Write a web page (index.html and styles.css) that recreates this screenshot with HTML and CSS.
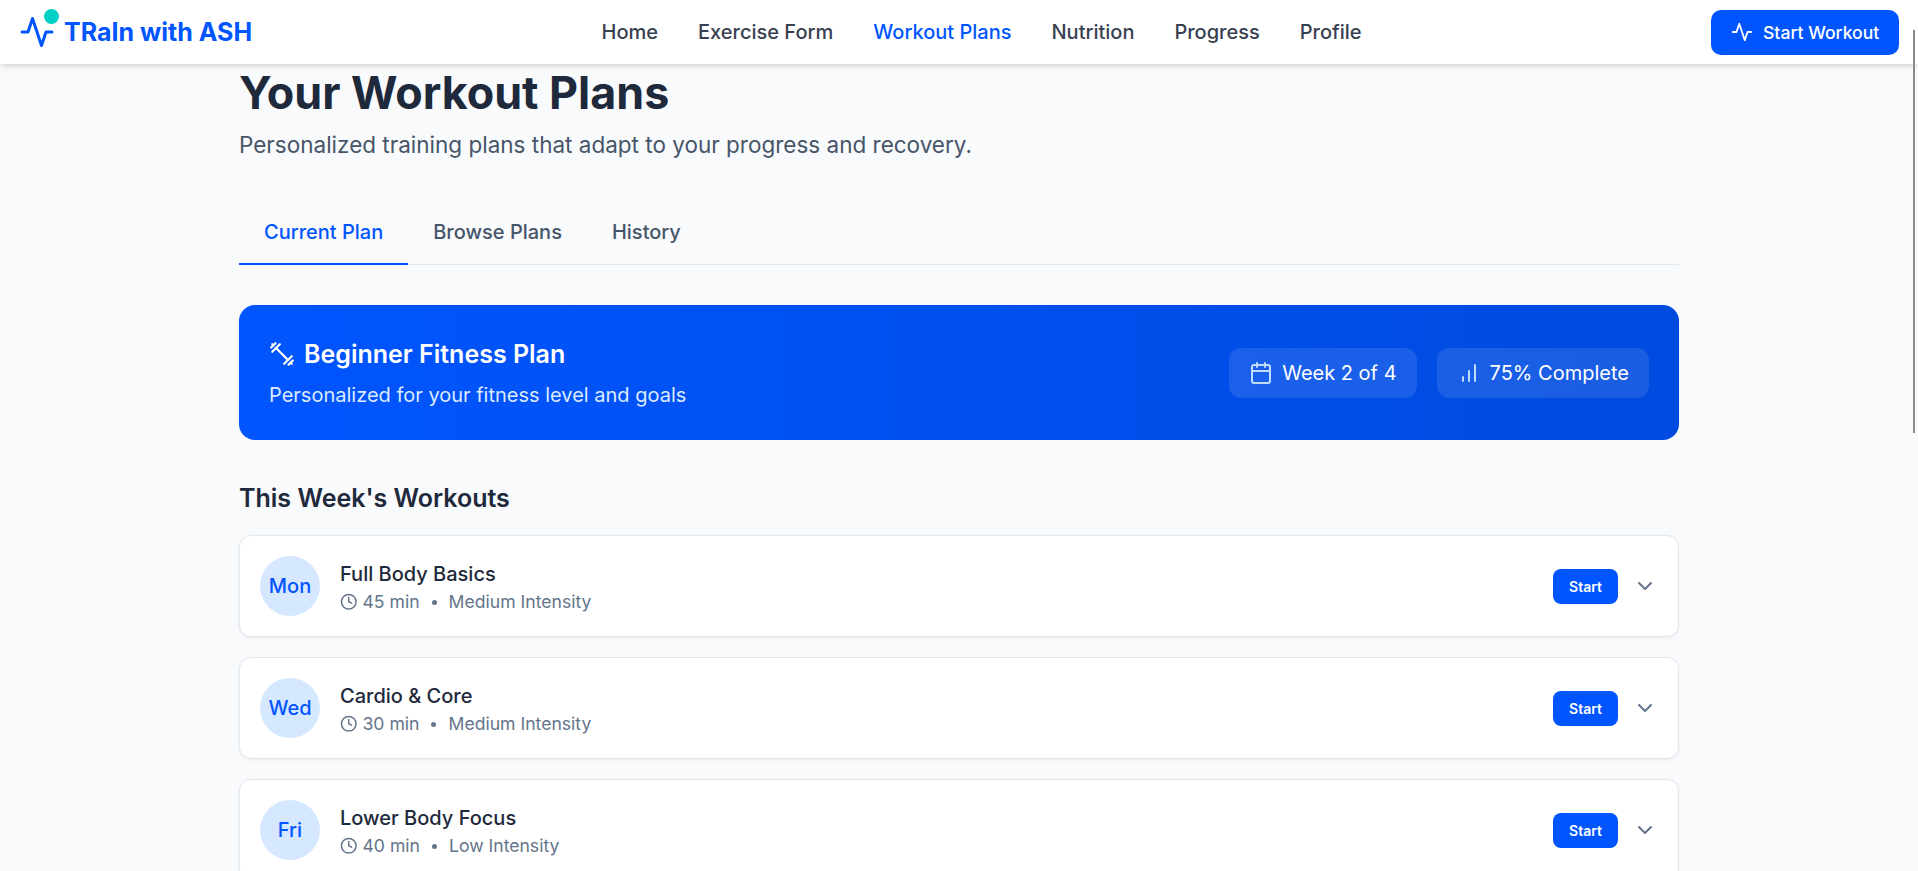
FILE: index.html
```html
<!DOCTYPE html>
<html>
<head>
  <title>TRaIn with ASH</title>
  <link rel="stylesheet" href="styles.css">
</head>
<body>
  <header class="topbar">
    <a class="logo">
      <span class="logo-mark">
        <svg class="logo-pulse" viewBox="0 0 24 24"><path d="M22 12h-4l-3 9L9 3l-3 9H2"/></svg>
        <span class="logo-dot"></span>
      </span>
      <span class="logo-text">TRaIn with ASH</span>
    </a>
    <nav class="nav">
      <a>Home</a>
      <a>Exercise Form</a>
      <a class="active">Workout Plans</a>
      <a>Nutrition</a>
      <a>Progress</a>
      <a>Profile</a>
    </nav>
    <button class="start-workout">
      <svg class="icon-22" viewBox="0 0 24 24"><path d="M22 12h-4l-3 9L9 3l-3 9H2"/></svg>
      Start Workout
    </button>
  </header>

  <main class="page">
    <h1>Your Workout Plans</h1>
    <p class="lead">Personalized training plans that adapt to your progress and recovery.</p>

    <div class="tabs">
      <a class="tab active">Current Plan</a>
      <a class="tab">Browse Plans</a>
      <a class="tab">History</a>
    </div>

    <section class="plan-hero">
      <div class="plan-heading">
        <h2>
          <svg class="icon-26" viewBox="0 0 24 24"><path d="m6.5 6.5 11 11"/><path d="m21 21-1-1"/><path d="m3 3 1 1"/><path d="m18 22 4-4"/><path d="m2 6 4-4"/><path d="m3 10 7-7"/><path d="m14 21 7-7"/></svg>
          Beginner Fitness Plan
        </h2>
        <p>Personalized for your fitness level and goals</p>
      </div>
      <div class="plan-stats">
        <div class="stat">
          <svg class="icon-24 stat-icon" viewBox="0 0 24 24"><path d="M8 2v4"/><path d="M16 2v4"/><rect x="3" y="4" width="18" height="18" rx="2"/><path d="M3 10h18"/></svg>
          Week 2 of 4
        </div>
        <div class="stat">
          <svg class="icon-24 stat-icon" viewBox="0 0 24 24"><path d="M18 20V4"/><path d="M12 20V10"/><path d="M6 20v-4"/></svg>
          75% Complete
        </div>
      </div>
    </section>

    <h3 class="week-title">This Week's Workouts</h3>

    <div class="workouts">
      <div class="workout">
        <div class="day">Mon</div>
        <div class="workout-info">
          <div class="workout-name">Full Body Basics</div>
          <div class="workout-meta">
            <svg class="icon-clock" viewBox="0 0 24 24"><circle cx="12" cy="12" r="10"/><path d="M12 6v6l4 2"/></svg>
            <span>45 min</span><span class="sep"></span><span>Medium Intensity</span>
          </div>
        </div>
        <button class="start">Start</button>
        <svg class="chevron" viewBox="0 0 24 24"><path d="m6 9 6 6 6-6"/></svg>
      </div>
      <div class="workout">
        <div class="day">Wed</div>
        <div class="workout-info">
          <div class="workout-name">Cardio &amp; Core</div>
          <div class="workout-meta">
            <svg class="icon-clock" viewBox="0 0 24 24"><circle cx="12" cy="12" r="10"/><path d="M12 6v6l4 2"/></svg>
            <span>30 min</span><span class="sep"></span><span>Medium Intensity</span>
          </div>
        </div>
        <button class="start">Start</button>
        <svg class="chevron" viewBox="0 0 24 24"><path d="m6 9 6 6 6-6"/></svg>
      </div>
      <div class="workout">
        <div class="day">Fri</div>
        <div class="workout-info">
          <div class="workout-name">Lower Body Focus</div>
          <div class="workout-meta">
            <svg class="icon-clock" viewBox="0 0 24 24"><circle cx="12" cy="12" r="10"/><path d="M12 6v6l4 2"/></svg>
            <span>40 min</span><span class="sep"></span><span>Low Intensity</span>
          </div>
        </div>
        <button class="start">Start</button>
        <svg class="chevron" viewBox="0 0 24 24"><path d="m6 9 6 6 6-6"/></svg>
      </div>
    </div>
  </main>

  <div class="scroll-thumb"></div>
</body>
</html>
```

FILE: styles.css
```css
* {
  box-sizing: border-box;
}

html,
body {
  height: 100%;
  overflow: hidden;
}

body {
  margin: 0;
  font-family: Inter, "Liberation Sans", sans-serif;
  color: #1e293b;
  background-color: #f8fafc;
}

svg {
  fill: none;
  stroke: currentColor;
  stroke-width: 2;
  stroke-linecap: round;
  stroke-linejoin: round;
  flex-shrink: 0;
}

.icon-clock {
  width: 17.5px;
  height: 17.5px;
}

.icon-22 {
  width: 22px;
  height: 22px;
}

.icon-24 {
  width: 24px;
  height: 24px;
}

.icon-26 {
  width: 26px;
  height: 26px;
}

/* top bar */
.topbar {
  display: flex;
  align-items: center;
  justify-content: space-between;
  height: 64px;
  padding: 0 19px;
  background-color: #fff;
  box-shadow: 0 4px 6px -1px rgba(0, 0, 0, 0.1), 0 2px 4px -2px rgba(0, 0, 0, 0.1);
  position: relative;
  z-index: 2;
}

.logo {
  display: flex;
  align-items: center;
  gap: 9px;
}

.logo-mark {
  position: relative;
  display: block;
  width: 36px;
  height: 36px;
}

.logo-pulse {
  display: block;
  width: 36px;
  height: 36px;
  color: #0055ff;
}

.logo-dot {
  position: absolute;
  top: -5px;
  right: -4px;
  width: 15px;
  height: 15px;
  border-radius: 50%;
  background-color: #00d1c7;
}

.logo-text {
  font-size: 25px;
  font-weight: 700;
  color: #0055ff;
}

.nav {
  display: flex;
  gap: 40px;
}

.nav a {
  font-size: 20px;
  font-weight: 500;
  color: #374151;
}

.nav a.active {
  color: #0055ff;
}

.start-workout {
  display: flex;
  align-items: center;
  gap: 10px;
  width: 188px;
  height: 45px;
  padding: 0 20px;
  border: none;
  border-radius: 10px;
  font-family: inherit;
  font-size: 17.6px;
  font-weight: 500;
  white-space: nowrap;
  color: #fff;
  background-color: #0055ff;
}

/* main */
.page {
  width: 1440px;
  margin: 0 auto;
  padding-top: 3px;
}

h1 {
  margin: 0;
  font-size: 44.8px;
  line-height: 53px;
  font-weight: 700;
}

.lead {
  margin: 8px 0 0;
  font-size: 22.5px;
  line-height: 33px;
  color: #475569;
}

.tabs {
  display: flex;
  margin-top: 41px;
  border-bottom: 1px solid #e2e8f0;
}

.tab {
  padding: 16px 25px 17px;
  font-size: 20px;
  font-weight: 500;
  line-height: 28px;
  color: #475569;
  border-bottom: 2px solid transparent;
  margin-bottom: -1px;
}

.tab.active {
  color: #0055ff;
  border-bottom-color: #0055ff;
}

.plan-hero {
  display: flex;
  align-items: center;
  justify-content: space-between;
  height: 135px;
  margin-top: 40px;
  padding: 0 30px;
  border-radius: 16px;
  color: #fff;
  background: linear-gradient(90deg, #0055ff, #004bdf);
}

.plan-heading {
  padding-top: 2px;
}

.plan-hero h2 {
  display: flex;
  align-items: center;
  gap: 9px;
  margin: 0;
  font-size: 25px;
  line-height: 32px;
  font-weight: 600;
}

.plan-hero p {
  margin: 10px 0 0;
  font-size: 20px;
  line-height: 30px;
  color: #dbeafe;
}

.plan-stats {
  display: flex;
  gap: 20px;
}

.stat {
  display: flex;
  align-items: center;
  gap: 9px;
  height: 50px;
  padding: 0 20px;
  border-radius: 12px;
  font-size: 20px;
  background-color: rgba(255, 255, 255, 0.1);
}

.stat-icon {
  color: #bfdbfe;
}

.week-title {
  margin: 42px 0 21px;
  font-size: 25px;
  line-height: 32px;
  font-weight: 600;
}

.workouts {
  display: flex;
  flex-direction: column;
  gap: 20px;
}

.workout {
  display: flex;
  align-items: center;
  height: 102px;
  padding: 0 21px 0 20px;
  border: 1px solid #e2e8f0;
  border-radius: 12px;
  background-color: #fff;
  box-shadow: 0 1px 3px rgba(0, 0, 0, 0.06);
}

.day {
  display: flex;
  align-items: center;
  justify-content: center;
  width: 60px;
  height: 60px;
  border-radius: 50%;
  font-size: 20px;
  font-weight: 500;
  color: #0055ff;
  background-color: #d6e8ff;
}

.workout-info {
  flex: 1;
  margin: 3px 0 0 20px;
}

.workout-name {
  font-size: 20px;
  font-weight: 500;
  line-height: 28px;
  color: #1e293b;
}

.workout-meta {
  display: flex;
  align-items: center;
  gap: 5px;
  margin-top: 1px;
  font-size: 17.6px;
  line-height: 26px;
  color: #64748b;
}

.sep {
  width: 5px;
  height: 5px;
  margin: 0 7px;
  border-radius: 50%;
  background-color: #64748b;
}

.start {
  width: 65px;
  height: 35px;
  border: none;
  border-radius: 8px;
  font-family: inherit;
  font-size: 14px;
  font-weight: 600;
  color: #fff;
  background-color: #0055ff;
}

.chevron {
  width: 24px;
  height: 24px;
  margin-left: 15px;
  color: #64748b;
}

/* overlay scrollbar */
.scroll-thumb {
  position: absolute;
  top: 30px;
  left: 1913px;
  width: 2px;
  height: 403px;
  background-color: #8a8a8a;
  z-index: 3;
}
```
